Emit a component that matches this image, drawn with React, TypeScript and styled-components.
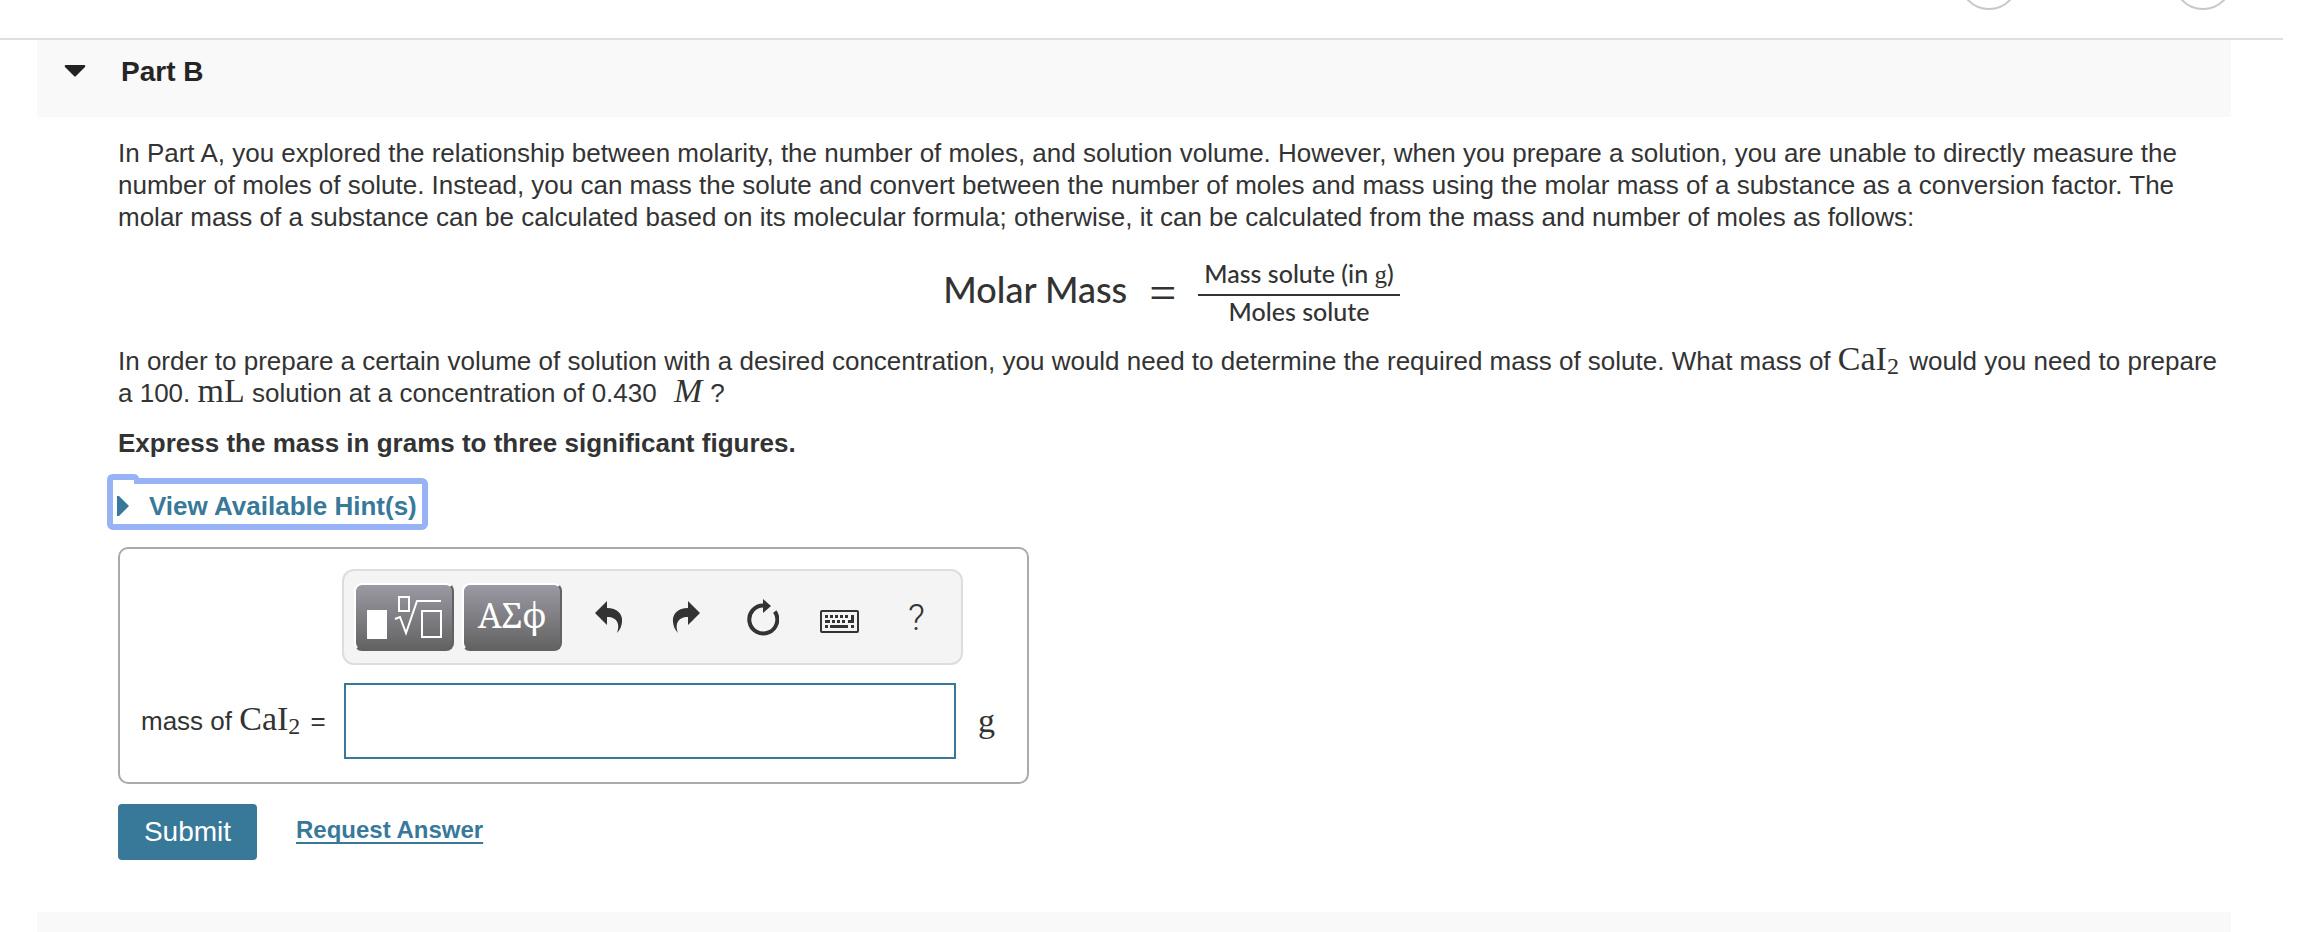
import React from "react";
import styled, { createGlobalStyle } from "styled-components";

const GlobalStyle = createGlobalStyle`
  * { box-sizing: border-box; }
  body {
    margin: 0;
    background: #ffffff;
    color: #333333;
    font-family: "Liberation Sans", Arial, Helvetica, sans-serif;
    font-size: 26px;
    line-height: 32px;
  }
  button, input { font-family: inherit; }
`;

const Page = styled.div`
  padding-right: 37px;
`;

const PageHeader = styled.header`
  display: flex;
  justify-content: flex-end;
  align-items: flex-end;
  gap: 154px;
  height: 40px;
  padding: 0 50px 28px 0;
  border-bottom: 2px solid #dfdfdf;
`;

const RoundButton = styled.button`
  flex: none;
  width: 60px;
  height: 60px;
  border: 2px solid #c8c8c8;
  border-radius: 50%;
  background: #ffffff;
`;

const Main = styled.main`
  margin: 0 52px 0 37px;
`;

const PartHeader = styled.h2`
  display: flex;
  align-items: flex-start;
  gap: 35px;
  height: 77px;
  margin: 0;
  padding: 16px 0 0 27px;
  background: #f9f9f9;
  color: #252525;
  font-size: 28px;
  line-height: 32px;
`;

const Caret = styled.svg`
  flex: none;
  margin-top: 9px;
`;

const Content = styled.section`
  padding: 20px 0 52px 81px;
`;

const Paragraph = styled.p`
  margin: 0 0 18px;
`;

const Strong = styled(Paragraph)`
  margin-bottom: 19px;
  font-weight: bold;
`;

const MathText = styled.span`
  font-family: "Liberation Serif", "Times New Roman", serif;
  font-size: 34px;
  line-height: 0;
  sub {
    margin-right: 3px;
    font-size: 24px;
    line-height: 0;
    vertical-align: -4px;
  }
`;

const Unit = styled(MathText)`
  font-style: italic;
  margin: 0 8px 0 10px;
`;

const Formula = styled.div`
  display: flex;
  justify-content: center;
  align-items: center;
  gap: 22px;
  height: 76px;
  margin: 0 0 18px;
  padding-right: 6px;
  font-family: Lato, "Noto Sans", sans-serif;
  font-size: 36px;
  font-weight: 500;
`;

const Equals = styled.span`
  padding-top: 8px;
  font-family: "Liberation Serif", serif;
  font-size: 48px;
`;

const Fraction = styled.span`
  display: flex;
  flex-direction: column;
  align-items: center;
  font-size: 25px;
  line-height: 30px;
`;

const Numerator = styled.span`
  padding: 5px 6px 4px;
  border-bottom: 2px solid #333333;
`;

const RomanG = styled.span`
  font-family: "Liberation Serif", serif;
`;

const HintButton = styled.button`
  position: relative;
  display: flex;
  align-items: center;
  gap: 20px;
  height: 52px;
  margin: 0 0 17px -11px;
  padding: 4px 5px 0 4px;
  border: 6px solid #97b3f6;
  border-radius: 6px;
  background: #ffffff;
  color: #38799a;
  font-size: 26px;
  font-weight: bold;
`;

const FocusNotch = styled.svg`
  position: absolute;
  left: -6px;
  top: -10px;
`;

const AnswerBox = styled.form`
  display: grid;
  grid-template-columns: 203px 612px auto;
  align-items: center;
  row-gap: 18px;
  width: 911px;
  padding: 20px 0 23px 21px;
  border: 2px solid #aaaaaa;
  border-radius: 10px;
`;

const Toolbar = styled.div`
  grid-column: 2 / 4;
  display: flex;
  align-items: center;
  width: 621px;
  height: 96px;
  margin-left: -2px;
  padding-left: 10px;
  border: 2px solid #dddddd;
  border-radius: 12px;
  background: #f4f4f4;
`;

const PaletteButton = styled.button`
  flex: none;
  display: flex;
  justify-content: center;
  align-items: center;
  width: 100px;
  height: 68px;
  margin-right: 8px;
  padding: 0;
  border: 2px solid;
  border-color: #ffffff #626262 #626262 #ffffff;
  border-radius: 8px;
  background: linear-gradient(#9b99a3, #636363);
  color: #ffffff;
`;

const GreekButton = styled(PaletteButton)`
  padding-bottom: 4px;
  font-family: "Noto Serif", "DejaVu Serif", serif;
  font-size: 34px;
`;

const IconButton = styled.button`
  flex: none;
  display: flex;
  justify-content: center;
  align-items: center;
  width: 77px;
  height: 68px;
  padding: 0;
  border: 0;
  background: transparent;
  color: #333333;
  font-family: Roboto, sans-serif;
  font-size: 37px;
  font-weight: 300;
`;

const KeyboardButton = styled(IconButton)`
  padding-top: 8px;
`;

const AnswerInput = styled.input`
  width: 100%;
  height: 76px;
  padding: 0 12px;
  border: 2px solid #38799a;
  background: #ffffff;
  font-size: 28px;
`;

const AnswerUnit = styled(MathText)`
  margin-left: 22px;
  line-height: 36px;
`;

const Actions = styled.div`
  display: flex;
  align-items: center;
  gap: 39px;
  margin-top: 20px;
`;

const SubmitButton = styled.button`
  width: 139px;
  height: 56px;
  padding: 0;
  border: 0;
  border-radius: 4px;
  background: #38799a;
  color: #ffffff;
  font-size: 28px;
`;

const RequestLink = styled.a`
  padding-bottom: 4px;
  color: #38799a;
  font-size: 24px;
  font-weight: bold;
  text-underline-offset: 4px;
  text-decoration-thickness: 2px;
  text-decoration-skip-ink: none;
`;

const NextPart = styled.div`
  height: 20px;
  background: #f9f9f9;
`;

const CalciumIodide = () => (
  <MathText>
    CaI<sub>2</sub>
  </MathText>
);

const TemplateIcon = () => (
  <svg width="75" height="43" viewBox="0 0 75 43" fill="none" stroke="#fff" strokeWidth="2" aria-hidden="true">
    <rect x="0" y="14" width="20" height="29" fill="#fff" stroke="none" />
    <rect x="32" y="1" width="10" height="14" />
    <path d="M28 23l5-2 6 16L50 5h24" />
    <rect x="55" y="15" width="19" height="26" />
  </svg>
);

const UndoIcon = () => (
  <svg width="28" height="32" viewBox="0 0 28 32" fill="currentColor" aria-hidden="true">
    <path d="M0 12L12 0v7c10 0 16 6 15 14-.4 4-2 8-5 11 3-8 1-16-10-16v8z" />
  </svg>
);

const RedoIcon = () => (
  <svg width="28" height="32" viewBox="0 0 28 32" fill="currentColor" aria-hidden="true">
    <path d="M28 12L16 0v7C6 7 0 13 1 21c.4 4 2 8 5 11-3-8-1-16 10-16v8z" />
  </svg>
);

const ResetIcon = () => (
  <svg width="32" height="37" viewBox="0 0 32 37" aria-hidden="true">
    <path d="M27.800 12.500A14 14 0 1 1 17 6.500" fill="none" stroke="currentColor" strokeWidth="4" />
    <path d="M16 0l8 7-8 7z" fill="currentColor" />
  </svg>
);

const KeyboardIcon = () => (
  <svg width="39" height="23" viewBox="0 0 39 23" aria-hidden="true">
    <rect x="1" y="1" width="37" height="21" rx="1" fill="none" stroke="currentColor" strokeWidth="2" />
    <path
      d="M5 5h3v3H5zM10 5h3v3h-3zM15 5h3v3h-3zM20 5h3v3h-3zM25 5h3v3h-3zM5 10h5v3H5zM12 10h3v3h-3zM17 10h3v3h-3zM22 10h3v3h-3zM31 5h3v8h-6v-3h3zM5 15h3v3H5zM10 15h18v3H10zM31 15h3v3h-3z"
      fill="currentColor"
    />
  </svg>
);

export default function App() {
  return (
    <>
      <GlobalStyle />
      <Page>
        <PageHeader>
          <RoundButton type="button" aria-label="Previous item" />
          <RoundButton type="button" aria-label="Next item" />
        </PageHeader>
        <Main>
          <PartHeader>
            <Caret width="22" height="12" viewBox="0 0 22 12" aria-hidden="true">
              <path d="M2 0h18q2 0 1 2l-9 9q-1 1-2 0L1 2Q0 0 2 0z" fill="#222" />
            </Caret>
            Part B
          </PartHeader>
          <Content>
            <Paragraph>
              In Part A, you explored the relationship between molarity, the number of moles, and solution volume.
              However, when you prepare a solution, you are unable to directly measure the number of moles of solute.
              Instead, you can mass the solute and convert between the number of moles and mass using the molar mass of
              a substance as a conversion factor. The molar mass of a substance can be calculated based on its
              molecular formula; otherwise, it can be calculated from the mass and number of moles as follows:
            </Paragraph>
            <Formula>
              <span>Molar Mass</span>
              <Equals>=</Equals>
              <Fraction>
                <Numerator>
                  Mass solute (in <RomanG>g</RomanG>)
                </Numerator>
                <span>Moles solute</span>
              </Fraction>
            </Formula>
            <Paragraph>
              In order to prepare a certain volume of solution with a desired concentration, you would need to
              determine the required mass of solute. What mass of <CalciumIodide /> would you need to prepare a 100.{" "}
              <MathText>mL</MathText> solution at a concentration of 0.430 <Unit>M</Unit>?
            </Paragraph>
            <Strong>Express the mass in grams to three significant figures.</Strong>
            <HintButton type="button">
              <FocusNotch width="32" height="16" viewBox="0 0 32 16" aria-hidden="true">
                <path d="M0 16V6q0-6 6-6h20q6 0 6 5H27V6H6v10z" fill="#97b3f6" />
                <path d="M6 6h21v10H6z" fill="#fff" />
              </FocusNotch>
              <svg width="12" height="20" viewBox="0 0 12 20" aria-hidden="true">
                <path d="M0 0h2l10 10L2 20H0z" fill="#38799a" />
              </svg>
              View Available Hint(s)
            </HintButton>
            <AnswerBox>
              <Toolbar role="toolbar" aria-label="Equation tools">
                <PaletteButton type="button" aria-label="Templates">
                  <TemplateIcon />
                </PaletteButton>
                <GreekButton type="button">ΑΣϕ</GreekButton>
                <IconButton type="button" aria-label="Undo">
                  <UndoIcon />
                </IconButton>
                <IconButton type="button" aria-label="Redo">
                  <RedoIcon />
                </IconButton>
                <IconButton type="button" aria-label="Reset">
                  <ResetIcon />
                </IconButton>
                <KeyboardButton type="button" aria-label="Keyboard shortcuts">
                  <KeyboardIcon />
                </KeyboardButton>
                <IconButton type="button">?</IconButton>
              </Toolbar>
              <label htmlFor="mass">
                mass of <CalciumIodide /> =
              </label>
              <AnswerInput id="mass" type="text" />
              <AnswerUnit>g</AnswerUnit>
            </AnswerBox>
            <Actions>
              <SubmitButton type="button">Submit</SubmitButton>
              <RequestLink href="#request">Request Answer</RequestLink>
            </Actions>
          </Content>
          <NextPart />
        </Main>
      </Page>
    </>
  );
}
